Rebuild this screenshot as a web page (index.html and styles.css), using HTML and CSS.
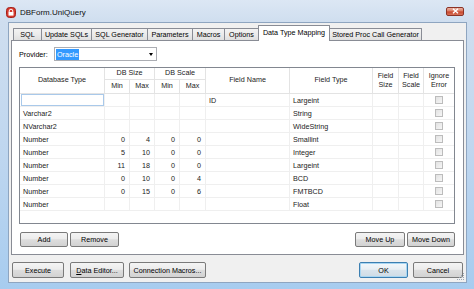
FILE: index.html
```html
<!DOCTYPE html>
<html>
<head>
<meta charset="utf-8">
<link rel="stylesheet" href="styles.css">
</head>
<body>
<div class="window">
  <div class="titlebar">
    <svg class="app-icon" viewBox="0 0 10 11"><rect x="0.5" y="0.5" width="9" height="10" rx="3" fill="#d63a2f" stroke="#a4221a"/><path d="M3.2 5.2V4a1.8 1.8 0 0 1 3.6 0v1.2" fill="none" stroke="#fff" stroke-width="1"/><rect x="2.5" y="5" width="5" height="3.6" fill="#fff"/></svg>
    <span class="title">DBForm.UniQuery</span>
    <div class="close-btn"><svg viewBox="0 0 7 6" class="close-x"><path d="M1 0.8L6 5.2M6 0.8L1 5.2" stroke="#fff" stroke-width="1.4"/></svg></div>
  </div>
  <div class="client">
    <div class="tabs">
      <div class="tab">SQL</div>
      <div class="tab">Update SQLs</div>
      <div class="tab">SQL Generator</div>
      <div class="tab">Parameters</div>
      <div class="tab">Macros</div>
      <div class="tab">Options</div>
      <div class="tab active">Data Type Mapping</div>
      <div class="tab">Stored Proc Call Generator</div>
    </div>
    <div class="page">
      <div class="provider">
        <label class="provider-label">Provider:</label>
        <div class="combo"><span class="sel">Oracle</span><span class="arrow"></span></div>
      </div>
      <div class="grid">
        <div class="hd span-rows">Database Type</div>
        <div class="hd span-size">DB Size</div>
        <div class="hd span-scale">DB Scale</div>
        <div class="hd span-rows col6">Field Name</div>
        <div class="hd span-rows col7">Field Type</div>
        <div class="hd span-rows col8">Field<br>Size</div>
        <div class="hd span-rows col9">Field<br>Scale</div>
        <div class="hd span-rows col10 last">Ignore<br>Error</div>
        <div class="hd sub col2">Min</div>
        <div class="hd sub col3">Max</div>
        <div class="hd sub col4">Min</div>
        <div class="hd sub col5">Max</div>

        <div class="cell edit-cell"><span class="editor"></span></div><div class="cell num"></div><div class="cell num"></div><div class="cell num"></div><div class="cell num"></div><div class="cell">ID</div><div class="cell">Largeint</div><div class="cell"></div><div class="cell"></div><div class="cell chk-cell"><span class="chk"></span></div>

        <div class="cell">Varchar2</div><div class="cell num"></div><div class="cell num"></div><div class="cell num"></div><div class="cell num"></div><div class="cell"></div><div class="cell">String</div><div class="cell"></div><div class="cell"></div><div class="cell chk-cell"><span class="chk"></span></div>

        <div class="cell">NVarchar2</div><div class="cell num"></div><div class="cell num"></div><div class="cell num"></div><div class="cell num"></div><div class="cell"></div><div class="cell">WideString</div><div class="cell"></div><div class="cell"></div><div class="cell chk-cell"><span class="chk"></span></div>

        <div class="cell">Number</div><div class="cell num">0</div><div class="cell num">4</div><div class="cell num">0</div><div class="cell num">0</div><div class="cell"></div><div class="cell">Smallint</div><div class="cell"></div><div class="cell"></div><div class="cell chk-cell"><span class="chk"></span></div>

        <div class="cell">Number</div><div class="cell num">5</div><div class="cell num">10</div><div class="cell num">0</div><div class="cell num">0</div><div class="cell"></div><div class="cell">Integer</div><div class="cell"></div><div class="cell"></div><div class="cell chk-cell"><span class="chk"></span></div>

        <div class="cell">Number</div><div class="cell num">11</div><div class="cell num">18</div><div class="cell num">0</div><div class="cell num">0</div><div class="cell"></div><div class="cell">Largeint</div><div class="cell"></div><div class="cell"></div><div class="cell chk-cell"><span class="chk"></span></div>

        <div class="cell">Number</div><div class="cell num">0</div><div class="cell num">10</div><div class="cell num">0</div><div class="cell num">4</div><div class="cell"></div><div class="cell">BCD</div><div class="cell"></div><div class="cell"></div><div class="cell chk-cell"><span class="chk"></span></div>

        <div class="cell">Number</div><div class="cell num">0</div><div class="cell num">15</div><div class="cell num">0</div><div class="cell num">6</div><div class="cell"></div><div class="cell">FMTBCD</div><div class="cell"></div><div class="cell"></div><div class="cell chk-cell"><span class="chk"></span></div>

        <div class="cell">Number</div><div class="cell num"></div><div class="cell num"></div><div class="cell num"></div><div class="cell num"></div><div class="cell"></div><div class="cell">Float</div><div class="cell"></div><div class="cell"></div><div class="cell chk-cell"><span class="chk"></span></div>
      </div>
      <div class="page-actions">
        <button class="btn w48">Add</button>
        <button class="btn w49">Remove</button>
        <span class="spacer"></span>
        <button class="btn w50">Move Up</button>
        <button class="btn w48">Move Down</button>
      </div>
    </div>
    <div class="dialog-actions">
      <button class="btn tall w52">Execute</button>
      <button class="btn tall w54"><u>D</u>ata Editor...</button>
      <button class="btn tall w77">Connection Macros...</button>
      <span class="spacer"></span>
      <button class="btn tall w49 default">OK</button>
      <button class="btn tall w50">Cancel</button>
    </div>
    <svg class="grip" viewBox="0 0 9 9"><g fill="#9aa7b5"><rect x="7" y="1" width="1" height="1"/><rect x="5" y="3" width="1" height="1"/><rect x="7" y="3" width="1" height="1"/><rect x="3" y="5" width="1" height="1"/><rect x="5" y="5" width="1" height="1"/><rect x="7" y="5" width="1" height="1"/><rect x="1" y="7" width="1" height="1"/><rect x="3" y="7" width="1" height="1"/><rect x="5" y="7" width="1" height="1"/><rect x="7" y="7" width="1" height="1"/></g></svg>
  </div>
</div>
</body>
</html>
```
FILE: styles.css
```css
* { box-sizing: border-box; }
html, body { margin: 0; padding: 0; }
body {
  font-family: "Liberation Sans", Arial, sans-serif;
  font-size: 7.2px;
  color: #000;
  background: #b9d3ee;
}
.window {
  width: 474px;
  height: 289px;
  display: flex;
  flex-direction: column;
  background: linear-gradient(180deg, #dce7f4 0px, #cfdeef 22px, #bed6ef 55%, #a7ccef 100%);
  overflow: hidden;
}
.titlebar {
  height: 22px;
  flex: none;
  display: flex;
  align-items: center;
  padding: 2px 10px 0 6px;
}
.app-icon { width: 10px; height: 11px; margin-right: 4px; flex: none; }
.title { flex: 1; font-size: 8px; color: #101010; }
.close-btn {
  width: 18px;
  height: 9px;
  margin-top: -2px;
  border: 1px solid #8c3326;
  border-radius: 2px;
  background: linear-gradient(180deg, #e9b2a4 0%, #d9785f 48%, #c8432a 52%, #d6735a 100%);
  display: flex;
  align-items: center;
  justify-content: center;
}
.close-x { width: 7px; height: 6px; }

.client {
  flex: 1;
  margin: 0 7px 6px 8px;
  border: 1px solid #8ea5c0;
  background: #f0f0f0;
  padding: 0 2px;
  position: relative;
  display: flex;
  flex-direction: column;
}
.tabs {
  height: 17px;
  flex: none;
  margin-left: 2px;
  display: grid;
  grid-template-columns: 28px 50px 56px 45px 32px 34px 71px 92px;
  align-items: end;
  position: relative;
  z-index: 1;
}
.tab {
  height: 12px;
  margin-right: -1px;
  border: 1px solid #898c95;
  border-bottom: none;
  border-radius: 1px 1px 0 0;
  background: linear-gradient(180deg, #f3f3f3 0%, #ebebeb 50%, #dfdfdf 100%);
  display: flex;
  align-items: center;
  justify-content: center;
  white-space: nowrap;
}
.tab.active {
  height: 16px;
  margin-bottom: -1px;
  background: #fff;
  padding-bottom: 2px;
}
.page {
  height: 215px;
  flex: none;
  border: 1px solid #898c95;
  background: #fff;
  padding: 6px 0 0 7px;
  display: flex;
  flex-direction: column;
}
.provider { height: 14px; display: flex; align-items: center; }
.provider-label { width: 35px; }
.combo {
  width: 103px;
  height: 14px;
  border: 1px solid #abadb3;
  background: #fff;
  display: flex;
  align-items: center;
  padding: 0 3px 0 1px;
}
.sel {
  background: #3399ff;
  color: #fff;
  height: 11px;
  line-height: 11px;
  padding: 0 1px;
}
.arrow {
  margin-left: auto;
  width: 0;
  height: 0;
  border-left: 2.5px solid transparent;
  border-right: 2.5px solid transparent;
  border-top: 3px solid #000;
}
.grid {
  margin-top: 6px;
  width: 436px;
  height: 157px;
  flex: none;
  border: 1px solid #828790;
  display: grid;
  grid-template-columns: 85px 25px 25px 25px 26px 84px 83px 26px 25px 30px;
  grid-template-rows: 12px 14px;
  grid-auto-rows: 13px;
  align-content: start;
  overflow: hidden;
}
.hd {
  border-right: 1px solid #e3e3e3;
  border-bottom: 1px solid #e3e3e3;
  display: flex;
  align-items: center;
  justify-content: center;
  text-align: center;
  line-height: 1.2;
  color: #222;
}
.span-rows { grid-row: 1 / 3; }
.span-size { grid-column: 2 / 4; grid-row: 1; }
.span-scale { grid-column: 4 / 6; grid-row: 1; }
.col2 { grid-column: 2; }
.col3 { grid-column: 3; }
.col4 { grid-column: 4; }
.col5 { grid-column: 5; }
.col6 { grid-column: 6; }
.col7 { grid-column: 7; }
.col8 { grid-column: 8; }
.col9 { grid-column: 9; }
.col10 { grid-column: 10; }
.sub { grid-row: 2; }
.last { border-right: none; }
.cell {
  border-right: 1px solid #efefef;
  border-bottom: 1px solid #efefef;
  padding: 0 3px;
  display: flex;
  align-items: center;
  white-space: nowrap;
  overflow: hidden;
  color: #222;
}
.num { justify-content: flex-end; padding-right: 4px; }
.chk-cell { justify-content: center; border-right: none; }
.chk {
  width: 8px;
  height: 8px;
  border: 1px solid #bcbcbc;
  background: linear-gradient(135deg, #e2e2e2, #f6f6f6);
}
.edit-cell { padding: 0 0 0 1px; align-items: stretch; }
.editor {
  flex: 1;
  border: 1px solid #a9c9ea;
  background: #fff;
}
.page-actions {
  margin-top: 8px;
  width: 436px;
  padding-left: 1px;
  display: flex;
  gap: 2px;
}
.spacer { flex: 1; }
.btn {
  height: 15px;
  padding: 0;
  font: inherit;
  color: #000;
  border: 1px solid #7a7a7a;
  border-radius: 2px;
  background: linear-gradient(180deg, #f4f4f4 0%, #ececec 45%, #dddddd 52%, #d2d2d2 100%);
  display: flex;
  align-items: center;
  justify-content: center;
  white-space: nowrap;
}
.btn u { text-decoration: underline; }
.w48 { width: 48px; }
.w49 { width: 49px; }
.w50 { width: 50px; }
.w52 { width: 52px; }
.w54 { width: 54px; }
.w77 { width: 77px; }
.dialog-actions {
  margin-top: 7px;
  padding: 0 1px 0 1px;
  display: flex;
  gap: 5px;
}
.dialog-actions .w52 { margin-right: 1px; }
.btn.tall { height: 16px; }
.btn.default {
  border-color: #3c7fb1;
  box-shadow: inset 0 0 0 1px #a8d6f2;
  background: linear-gradient(180deg, #f3f8fb 0%, #e8eff4 45%, #d9e4ec 52%, #cedbe5 100%);
}
.grip {
  position: absolute;
  right: 1px;
  bottom: 1px;
  width: 9px;
  height: 9px;
}
```
